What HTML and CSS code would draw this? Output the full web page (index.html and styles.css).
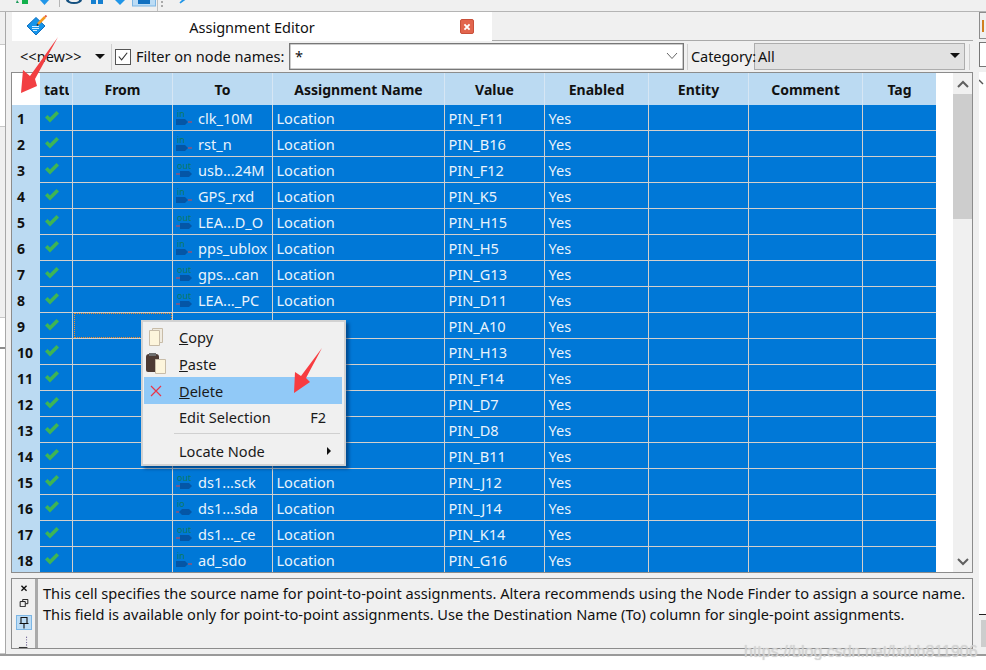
FILE: index.html
```html
<!DOCTYPE html>
<html lang="en">
<head>
<meta charset="utf-8">
<title>Assignment Editor</title>
<link rel="stylesheet" href="styles.css">
</head>
<body>
<svg class="defs" width="0" height="0" aria-hidden="true">
  <symbol id="check" viewBox="0 0 16 14"><path d="M1 7.500 L3.500 5 L6 7.500 L12.500 1 L15 3.500 L6 12.500 Z" fill="#3fb553"/></symbol>
  <symbol id="pin-in" viewBox="0 0 18 8"><path d="M0 1 H9 L12 4 L9 7 H0 Z" fill="#0456a6"/><path d="M12 4 H16" stroke="#d8404a" stroke-width="1"/></symbol>
  <symbol id="pin-out" viewBox="0 0 18 8"><path d="M4 1 H13 L16 4 L13 7 H4 Z" fill="#0456a6"/><path d="M0 4 H4" stroke="#d8404a" stroke-width="1"/></symbol>
  <symbol id="pin-io" viewBox="0 0 18 8"><path d="M3 4 L6 1 H13 L16 4 L13 7 H6 Z" fill="#0456a6"/><path d="M0 4 H3" stroke="#d8404a" stroke-width="1"/></symbol>
</svg>
<div class="app">
  <header class="topbar">
    <svg class="topbar-icons" width="200" height="11" viewBox="0 0 200 11">
      <path d="M17 0 L19 3 L16 3 Z" fill="#1a9a5a"/><rect x="22" y="0" width="6" height="4" fill="#12b04c"/>
      <path d="M40 0 H49 L44.500 5 Z" fill="#2196e8"/>
      <rect x="59" y="0" width="1" height="7" fill="#b5b5b5"/>
      <path d="M66 0 A8 4 0 0 0 82 0 L79 0 A5 2 0 0 1 69 0 Z" fill="#14507f"/>
      <rect x="91" y="0" width="5" height="4" fill="#1680d0"/><rect x="98" y="0" width="5" height="4" fill="#1680d0"/>
      <path d="M115 0 H125 L120 5 Z" fill="#2196e8"/>
      <rect x="132.500" y="-1" width="23" height="7" fill="#bcdcf5" stroke="#7cb6e4"/>
      <rect x="138" y="0" width="12" height="4" fill="#1170c0"/>
      <rect x="157" y="0" width="1" height="12" fill="#c0c0c0"/>
      <rect x="161" y="1" width="2" height="2" fill="#aaa"/><rect x="161" y="5" width="2" height="2" fill="#aaa"/>
      <path d="M180 3 L184 0 L183 0 Z" stroke="#2196e8" stroke-width="1.500"/>
    </svg>
  </header>
  <div class="workspace">
    <aside class="left-strip">
      <div class="strip-block strip-grey strip-a"></div>
      <div class="strip-block strip-white strip-b"></div>
      <div class="strip-block strip-grey strip-c"></div>
      <div class="strip-block strip-white strip-d"></div>
      <div class="strip-block strip-white strip-e"></div>
    </aside>
    <main class="editor">
      <div class="tab-row">
        <div class="tab">
          <svg class="logo" width="22" height="22" viewBox="0 0 22 22">
            <path d="M10 2.500 L19 11 L10 20 L1 11 Z" fill="#1594ea" stroke="#0f6fc0" stroke-width="1"/>
            <path d="M6 11.500 H13 M6 13.500 H13 M7 15.500 H11" stroke="#d5eeff" stroke-width="1"/>
            <path d="M12 9 L19 2" stroke="#f59a1e" stroke-width="2.500"/>
            <path d="M19 2 L20.500 0.500" stroke="#e2604a" stroke-width="2"/>
            <path d="M12 9 L11 10.500" stroke="#333" stroke-width="1.500"/>
          </svg>
          <span class="tab-title">Assignment Editor</span>
          <span class="close-btn"><svg width="14" height="14" viewBox="0 0 14 14"><path d="M4 4 L10 10 M10 4 L4 10" stroke="#fff" stroke-width="2.200"/></svg></span>
        </div>
        <div class="tab-rest"></div>
      </div>
      <div class="filter-row">
        <span class="new-label">&lt;&lt;new&gt;&gt;</span>
        <span class="tri new-tri"></span>
        <span class="divider div-a"></span>
        <span class="check-box"><svg width="15" height="15" viewBox="0 0 15 15"><path d="M3 7.500 L6 11 L12 3.500" fill="none" stroke="#333" stroke-width="1.200"/></svg></span>
        <span class="filter-label">Filter on node names:</span>
        <span class="filter-input"><span>*</span><svg width="12" height="8" viewBox="0 0 12 8"><path d="M1 1 L6 6.500 L11 1" fill="none" stroke="#666" stroke-width="1"/></svg></span>
        <span class="divider div-b"></span>
        <span class="category-label">Category:</span>
        <span class="category-combo"><span>All</span><span class="tri"></span></span>
        <span class="divider div-c"></span>
      </div>
      <div class="table-frame">
        <div class="table-area">
          <div class="row head-row">
            <div class="corner"></div>
            <div class="hc hc-status"><span class="clip">tatu</span></div>
            <div class="hc">From</div>
            <div class="hc">To</div>
            <div class="hc">Assignment Name</div>
            <div class="hc">Value</div>
            <div class="hc">Enabled</div>
            <div class="hc">Entity</div>
            <div class="hc">Comment</div>
            <div class="hc">Tag</div>
          </div>
          <div class="row"><div class="rh">1</div><div class="c"><svg class="chk"><use href="#check"/></svg></div><div class="c"></div><div class="c to"><span class="pin"><span class="pin-label">in</span><svg class="pin-body"><use href="#pin-in"/></svg></span>clk_10M</div><div class="c">Location</div><div class="c">PIN_F11</div><div class="c">Yes</div><div class="c"></div><div class="c"></div><div class="c"></div></div>
          <div class="row"><div class="rh">2</div><div class="c"><svg class="chk"><use href="#check"/></svg></div><div class="c"></div><div class="c to"><span class="pin"><span class="pin-label">in</span><svg class="pin-body"><use href="#pin-in"/></svg></span>rst_n</div><div class="c">Location</div><div class="c">PIN_B16</div><div class="c">Yes</div><div class="c"></div><div class="c"></div><div class="c"></div></div>
          <div class="row"><div class="rh">3</div><div class="c"><svg class="chk"><use href="#check"/></svg></div><div class="c"></div><div class="c to"><span class="pin"><span class="pin-label">out</span><svg class="pin-body"><use href="#pin-out"/></svg></span>usb...24M</div><div class="c">Location</div><div class="c">PIN_F12</div><div class="c">Yes</div><div class="c"></div><div class="c"></div><div class="c"></div></div>
          <div class="row"><div class="rh">4</div><div class="c"><svg class="chk"><use href="#check"/></svg></div><div class="c"></div><div class="c to"><span class="pin"><span class="pin-label">in</span><svg class="pin-body"><use href="#pin-in"/></svg></span>GPS_rxd</div><div class="c">Location</div><div class="c">PIN_K5</div><div class="c">Yes</div><div class="c"></div><div class="c"></div><div class="c"></div></div>
          <div class="row"><div class="rh">5</div><div class="c"><svg class="chk"><use href="#check"/></svg></div><div class="c"></div><div class="c to"><span class="pin"><span class="pin-label">out</span><svg class="pin-body"><use href="#pin-out"/></svg></span>LEA...D_O</div><div class="c">Location</div><div class="c">PIN_H15</div><div class="c">Yes</div><div class="c"></div><div class="c"></div><div class="c"></div></div>
          <div class="row"><div class="rh">6</div><div class="c"><svg class="chk"><use href="#check"/></svg></div><div class="c"></div><div class="c to"><span class="pin"><span class="pin-label">in</span><svg class="pin-body"><use href="#pin-in"/></svg></span>pps_ublox</div><div class="c">Location</div><div class="c">PIN_H5</div><div class="c">Yes</div><div class="c"></div><div class="c"></div><div class="c"></div></div>
          <div class="row"><div class="rh">7</div><div class="c"><svg class="chk"><use href="#check"/></svg></div><div class="c"></div><div class="c to"><span class="pin"><span class="pin-label">out</span><svg class="pin-body"><use href="#pin-out"/></svg></span>gps...can</div><div class="c">Location</div><div class="c">PIN_G13</div><div class="c">Yes</div><div class="c"></div><div class="c"></div><div class="c"></div></div>
          <div class="row"><div class="rh">8</div><div class="c"><svg class="chk"><use href="#check"/></svg></div><div class="c"></div><div class="c to"><span class="pin"><span class="pin-label">out</span><svg class="pin-body"><use href="#pin-out"/></svg></span>LEA..._PC</div><div class="c">Location</div><div class="c">PIN_D11</div><div class="c">Yes</div><div class="c"></div><div class="c"></div><div class="c"></div></div>
          <div class="row"><div class="rh">9</div><div class="c"><svg class="chk"><use href="#check"/></svg></div><div class="c focus"></div><div class="c to"></div><div class="c"></div><div class="c">PIN_A10</div><div class="c">Yes</div><div class="c"></div><div class="c"></div><div class="c"></div></div>
          <div class="row"><div class="rh">10</div><div class="c"><svg class="chk"><use href="#check"/></svg></div><div class="c"></div><div class="c to"></div><div class="c"></div><div class="c">PIN_H13</div><div class="c">Yes</div><div class="c"></div><div class="c"></div><div class="c"></div></div>
          <div class="row"><div class="rh">11</div><div class="c"><svg class="chk"><use href="#check"/></svg></div><div class="c"></div><div class="c to"></div><div class="c"></div><div class="c">PIN_F14</div><div class="c">Yes</div><div class="c"></div><div class="c"></div><div class="c"></div></div>
          <div class="row"><div class="rh">12</div><div class="c"><svg class="chk"><use href="#check"/></svg></div><div class="c"></div><div class="c to"></div><div class="c"></div><div class="c">PIN_D7</div><div class="c">Yes</div><div class="c"></div><div class="c"></div><div class="c"></div></div>
          <div class="row"><div class="rh">13</div><div class="c"><svg class="chk"><use href="#check"/></svg></div><div class="c"></div><div class="c to"></div><div class="c"></div><div class="c">PIN_D8</div><div class="c">Yes</div><div class="c"></div><div class="c"></div><div class="c"></div></div>
          <div class="row"><div class="rh">14</div><div class="c"><svg class="chk"><use href="#check"/></svg></div><div class="c"></div><div class="c to"></div><div class="c"></div><div class="c">PIN_B11</div><div class="c">Yes</div><div class="c"></div><div class="c"></div><div class="c"></div></div>
          <div class="row"><div class="rh">15</div><div class="c"><svg class="chk"><use href="#check"/></svg></div><div class="c"></div><div class="c to"><span class="pin"><span class="pin-label">out</span><svg class="pin-body"><use href="#pin-out"/></svg></span>ds1...sck</div><div class="c">Location</div><div class="c">PIN_J12</div><div class="c">Yes</div><div class="c"></div><div class="c"></div><div class="c"></div></div>
          <div class="row"><div class="rh">16</div><div class="c"><svg class="chk"><use href="#check"/></svg></div><div class="c"></div><div class="c to"><span class="pin"><span class="pin-label">io</span><svg class="pin-body"><use href="#pin-io"/></svg></span>ds1...sda</div><div class="c">Location</div><div class="c">PIN_J14</div><div class="c">Yes</div><div class="c"></div><div class="c"></div><div class="c"></div></div>
          <div class="row"><div class="rh">17</div><div class="c"><svg class="chk"><use href="#check"/></svg></div><div class="c"></div><div class="c to"><span class="pin"><span class="pin-label">out</span><svg class="pin-body"><use href="#pin-out"/></svg></span>ds1..._ce</div><div class="c">Location</div><div class="c">PIN_K14</div><div class="c">Yes</div><div class="c"></div><div class="c"></div><div class="c"></div></div>
          <div class="row"><div class="rh">18</div><div class="c"><svg class="chk"><use href="#check"/></svg></div><div class="c"></div><div class="c to"><span class="pin"><span class="pin-label">in</span><svg class="pin-body"><use href="#pin-in"/></svg></span>ad_sdo</div><div class="c">Location</div><div class="c">PIN_G16</div><div class="c">Yes</div><div class="c"></div><div class="c"></div><div class="c"></div></div>
        </div>
        <div class="scrollbar">
          <svg class="scroll-arrow" width="14" height="10" viewBox="0 0 14 10"><path d="M2 8 L7 3 L12 8" fill="none" stroke="#606060" stroke-width="2"/></svg>
          <div class="scroll-thumb"></div>
          <div class="scroll-space"></div>
          <svg class="scroll-arrow" width="14" height="10" viewBox="0 0 14 10"><path d="M2 2 L7 7 L12 2" fill="none" stroke="#606060" stroke-width="2"/></svg>
        </div>
      </div>
      <div class="help-panel">
        <div class="help-tools">
          <svg width="10" height="10" viewBox="0 0 10 10"><path d="M2 2 L8 8 M8 2 L2 8" stroke="#111" stroke-width="1.600"/></svg>
          <svg width="10" height="10" viewBox="0 0 10 10"><path d="M3.500 2.500 V0.500 H9.500 V5.500 H7 M0.500 3 H6.500 V9 H0.500 Z" fill="none" stroke="#111" stroke-width="1.100"/></svg>
          <span class="pin-btn"><svg width="10" height="13" viewBox="0 0 10 13"><path d="M2 1.500 H8 V7.500 H2 Z M0.500 7.500 H9.500 M5 7.500 V12.500" fill="none" stroke="#111" stroke-width="1.100"/></svg></span>
          <svg width="12" height="14" viewBox="0 0 12 14"><path d="M9 1 V2 M9 4 V5 M9 7 V8 M9 10 V11" stroke="#4a3a7a" stroke-width="1.200"/><path d="M0 13.500 H10" stroke="#333" stroke-width="1.300"/></svg>
        </div>
        <div class="help-text">
          <p>This cell specifies the source name for point-to-point assignments. Altera recommends using the Node Finder to assign a source name.</p>
          <p>This field is available only for point-to-point assignments. Use the Destination Name (To) column for single-point assignments.</p>
        </div>
      </div>
    </main>
    <aside class="right-strip">
      <div class="rs-a"><span></span></div>
      <div class="rs-b"></div>
      <div class="rs-c"><svg width="7" height="7" viewBox="0 0 7 7"><path d="M0 2 L4 6" stroke="#555" stroke-width="1.500"/></svg></div>
      <div class="rs-d"></div>
    </aside>
  </div>

  <div class="context-menu">
    <div class="mi"><span class="mi-icon"><svg width="18" height="18" viewBox="0 0 18 18"><path d="M5.500 0.500 H15.500 V14.500 H5.500 Z" fill="#f0ebe0" stroke="#c8bca8"/><path d="M2.500 2.500 H12.500 V17.500 H2.500 Z" fill="#fdf5dc" stroke="#c8bca8"/></svg></span><span class="mi-text"><u>C</u>opy</span></div>
    <div class="mi"><span class="mi-icon"><svg width="21" height="21" viewBox="0 0 21 21"><path d="M1 4 Q1 1 4 1 H11 Q14 1 14 4 V19 H3 Q1 19 1 17 Z" fill="#4d3a33"/><rect x="4" y="0" width="7" height="3" fill="#6e6e6e"/><path d="M10.500 6.500 H20.500 V20.500 H10.500 Z" fill="#fdf5dc" stroke="#c8bca8"/></svg></span><span class="mi-text"><u>P</u>aste</span></div>
    <div class="mi mi-active"><span class="mi-icon"><svg width="14" height="14" viewBox="0 0 14 14"><path d="M2 2 L12 12 M12 2 L2 12" stroke="#e8354a" stroke-width="1.200"/></svg></span><span class="mi-text"><u>D</u>elete</span></div>
    <div class="mi mi-short"><span class="mi-icon"></span><span class="mi-text">Edit Selection</span><span class="mi-key">F2</span></div>
    <div class="mi-sep"></div>
    <div class="mi"><span class="mi-icon"></span><span class="mi-text">Locate Node</span><span class="mi-arrow"></span></div>
  </div>

  <svg class="arrow arrow-a" width="46" height="62" viewBox="0 0 46 62"><polygon points="44,1 21,43 23,50 7,57 9,34 16,40" fill="#f23f42"/></svg>
  <svg class="arrow arrow-b" width="36" height="52" viewBox="0 0 36 52"><polygon points="32,2 16,32 20,36 4,47 5,26 11,30" fill="#f83c40"/></svg>
  <div class="watermark">https://blog.csdn.net/lxthh811906</div>
</div>
</body>
</html>
```
FILE: styles.css
```css
* { box-sizing: border-box; }
html, body { margin: 0; padding: 0; }
body { width: 986px; height: 670px; overflow: hidden; background: #fff; font: 14.55px/20px "Noto Sans", "Open Sans", sans-serif; color: #111; }
.defs { position: absolute; }

.app { position: relative; width: 986px; height: 670px; overflow: hidden; background: #fff; }
.topbar { height: 12px; background: #f0f0f0; border-bottom: 1px solid #b4b4b4; overflow: hidden; }
.topbar-icons { display: block; }
.workspace { display: flex; height: 644px; background: #f0f0f0; border-bottom: 2px solid #9a9a9a; }

.left-strip { width: 6px; border-right: 1px solid #a8a8a8; display: flex; flex-direction: column; flex: none; }
.strip-block { border-bottom: 1px solid #c8c8c8; }
.strip-grey { background: #f0f0f0; }
.strip-white { background: #fff; }
.strip-a { height: 33px; }
.strip-b { height: 82px; }
.strip-c { height: 191px; }
.strip-d { height: 31px; border-bottom: 2px solid #8c8c8c; }
.strip-e { flex: 1; }

.editor { width: 968px; padding-left: 5px; padding-right: 1px; flex: none; display: flex; flex-direction: column; }
.tab-row { display: flex; height: 29px; }
.tab { width: 480px; margin-left: 1px; background: #fff; display: grid; grid-template-columns: 1fr auto 1fr; align-items: center; padding: 0 18px; }
.logo { justify-self: start; margin: -2px 0 0 -4px; }
.close-btn { justify-self: end; width: 14px; height: 15px; background: #e2654d; border: 1px solid #c9503a; border-radius: 2px; display: flex; align-items: center; justify-content: center; }
.tab-rest { flex: 1; border-bottom: 1px solid #a9a9a9; }

.filter-row { height: 31px; display: flex; align-items: center; padding-left: 9px; }
.new-label { width: 64px; white-space: nowrap; padding-bottom: 2px; }
.tri { display: inline-block; width: 0; height: 0; border-left: 5px solid transparent; border-right: 5px solid transparent; border-top: 5px solid #111; }
.new-tri { margin-left: 11px; }
.divider { width: 1px; height: 26px; background: #cfcfcf; flex: none; }
.div-a { margin-left: 6px; }
.check-box { width: 16px; height: 16px; margin-left: 3px; border: 1px solid #555; background: #fff; display: flex; align-items: center; justify-content: center; flex: none; }
.filter-label { margin-left: 5px; width: 149px; white-space: nowrap; padding-bottom: 2px; }
.filter-input { margin-left: 4px; width: 395px; height: 27px; background: #fff; border: 1px solid #777; box-shadow: inset 0 0 0 0.500px #999; display: flex; align-items: center; justify-content: space-between; padding: 0 5px 2px; }
.div-b { margin-left: 3px; }
.category-label { margin-left: 3px; width: 63px; white-space: nowrap; padding-bottom: 2px; letter-spacing: -0.100px; position: relative; z-index: 1; }
.category-combo { width: 211px; height: 27px; background: #e1e1e1; border: 1px solid #adadad; display: flex; align-items: center; justify-content: space-between; padding: 0 4px 2px 3px; }
.div-c { margin-left: 4px; }

.table-frame { height: 501px; display: flex; border: 1px solid #8c8c8c; overflow: hidden; background: #fff; }
.table-area { width: 941px; flex: none; overflow: hidden; }
.row { display: grid; grid-template-columns: 28px 33px 100px 100px 172px 100px 104px 100px 114px 73px; width: 924px; height: 26px; }
.head-row { height: 32px; background: #bbdaf2; }
.corner { background: #fff; }
.hc { display: flex; align-items: center; justify-content: center; font-weight: 700; font-size: 14px; padding-top: 1px; border-right: 1px solid #d6e6f4; color: #111; white-space: nowrap; }
.hc:last-child { border-right: 0; }
.hc-status { justify-content: flex-start; padding-left: 4px; overflow: hidden; }
.clip { width: 25px; overflow: hidden; display: block; }
.rh { background: #bbdaf2; display: flex; align-items: center; padding: 2px 0 0 5px; font-weight: 700; font-size: 14px; color: #111; }
.c { background: #0078d7; border-right: 1px solid #d4d0cc; border-bottom: 1px solid #d4d0cc; color: #e9f3fc; padding: 1px 0 0 3.500px; display: flex; align-items: center; white-space: nowrap; overflow: hidden; }
.c:last-child { border-right: 0; }
.chk { width: 16px; height: 14px; margin-top: -3px; flex: none; }
.to { padding-left: 3px; }
.pin { width: 18px; height: 16px; margin-right: 4px; margin-top: -1px; flex: none; display: flex; flex-direction: column; }
.pin-label { font-size: 9px; line-height: 8px; height: 8px; color: #0d7a66; padding-left: 1px; }
.pin-body { width: 18px; height: 8px; display: block; flex: none; }
.focus { position: relative; }
.focus::after { content: ""; position: absolute; left: 1px; top: 0; right: 0; bottom: 0; border: 1px dotted #f08a28; }

.scrollbar { width: 20px; background: #f0f0f0; display: flex; flex-direction: column; align-items: center; flex: none; }
.scroll-arrow { flex: none; margin: 6px 0 5px; }
.scroll-thumb { width: 100%; height: 125px; background: #cdcdcd; flex: none; }
.scroll-space { flex: 1; }

.help-panel { height: 71px; margin-top: 5px; display: flex; border: 1px solid #8c8c8c; background: #f0f0f0; }
.help-tools { width: 26px; display: flex; flex-direction: column; align-items: center; gap: 6px; padding-top: 5px; border-right: 3px solid #aaa; flex: none; }
.pin-btn { width: 16px; height: 15px; background: #bcdcf5; border: 1px solid #7cb6e4; display: flex; align-items: center; justify-content: center; margin-top: 2px; }
.help-text { padding: 4px 0 0 5px; }
.help-text p { margin: 0 0 1px; line-height: 20px; white-space: nowrap; font-size: 14.6px; }

.right-strip { flex: 1; display: flex; flex-direction: column; align-items: flex-end; }
.rs-a { width: 7px; height: 27px; background: #f0f0f0; border: 1px solid #8c8c8c; border-right: 0; display: flex; align-items: center; padding-left: 2px; }
.rs-a span { width: 2px; height: 12px; background: #d08020; }
.rs-b { width: 7px; height: 25px; margin-top: 3px; background: #fff; border: 1px solid #777; border-right: 0; }
.rs-c { width: 7px; height: 543px; margin-top: 5px; background: #fff; border-bottom: 1px solid #222; padding-top: 6px; }
.rs-c svg { display: block; }
.rs-d { width: 5px; height: 27px; margin-top: 5px; background: #cdcdcd; }

.context-menu { position: absolute; left: 141px; top: 320px; width: 205px; height: 146px; background: #f0f0f0; border: 2px solid #d2d2d2; box-shadow: 3px 3px 3px rgba(0,40,90,.55); padding: 1px 2px 0 1px; }
.mi { height: 27px; display: flex; align-items: center; position: relative; color: #1a1a1a; }
.mi-icon { width: 35px; flex: none; display: flex; align-items: center; justify-content: center; padding-right: 12px; }
.mi-text { padding-top: 1px; white-space: nowrap; }
.mi-active { background: #91c9f7; }
.mi-short { height: 26px; padding-right: 16px; }
.mi-short .mi-text, .mi-short .mi-key { padding-top: 0; padding-bottom: 1px; }
.mi-key { margin-left: auto; }
.mi-sep { height: 1px; background: #d0d0d0; margin: 3px 2px 3px 30px; }
.mi-arrow { margin-left: auto; margin-right: 11px; width: 0; height: 0; border-top: 4px solid transparent; border-bottom: 4px solid transparent; border-left: 4px solid #111; }

.arrow { position: absolute; }
.arrow-a { left: 14px; top: 36px; }
.arrow-b { left: 290px; top: 346px; }
.watermark { position: absolute; left: 744px; top: 642px; width: 240px; white-space: nowrap; font: 16px/20px "Liberation Sans", sans-serif; color: rgba(215,215,215,.8); text-shadow: 0 0 1px rgba(190,190,190,.8); }
```
